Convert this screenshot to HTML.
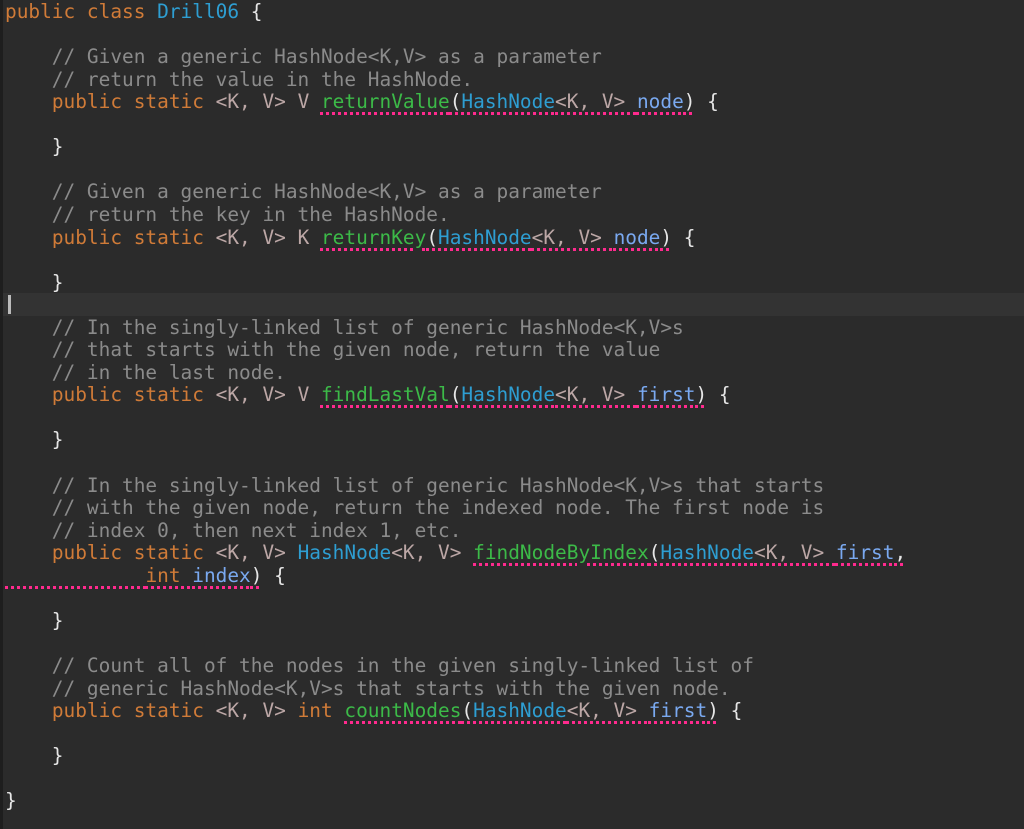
<!DOCTYPE html>
<html><head><meta charset="utf-8"><style>
html,body{margin:0;padding:0;background:#2b2b2b;width:1024px;height:829px;overflow:hidden}
#ed{position:absolute;left:0;top:0;width:1024px;height:829px;background:#2b2b2b;border-left:3px solid #1e1e1e;box-sizing:border-box}
.l{position:absolute;left:2px;height:22.55px;line-height:22.55px;white-space:pre;font-family:"DejaVu Sans Mono","Liberation Mono",monospace;font-size:19.45px;color:#e6e6e6}
.hl{position:absolute;left:0;width:1024px;height:22.55px;background:#333333;top:293px}
.caret{position:absolute;left:5px;top:295px;width:3px;height:19px;background:#bbbbbb}
.k{color:#d07b38}.c{color:#8b8b8b}.t{color:#2e9ed2}.g{color:#bca7a6}.m{color:#3cba48}.p{color:#7aa9f0}.w{color:#e8e8e8}
.u{text-decoration:underline dotted #ff2a8e;text-decoration-thickness:3px;text-underline-offset:4px}
</style></head><body><div id="ed">
<div class="hl"></div><div class="caret"></div>
<div class="l" style="top:1px"><span class="k">public class </span><span class="t">Drill06</span> {</div>
<div class="l c" style="top:46.1px">    // Given a generic HashNode&lt;K,V&gt; as a parameter</div>
<div class="l c" style="top:68.65px">    // return the value in the HashNode.</div>
<div class="l" style="top:91.2px">    <span class="k">public static </span><span class="g">&lt;K, V&gt; V </span><span class="u"><span class="m">returnValue</span>(<span class="t">HashNode</span><span class="g">&lt;K, V&gt; </span><span class="p">node</span>)</span> {</div>
<div class="l" style="top:136.3px">    }</div>
<div class="l c" style="top:181.4px">    // Given a generic HashNode&lt;K,V&gt; as a parameter</div>
<div class="l c" style="top:203.95px">    // return the key in the HashNode.</div>
<div class="l" style="top:226.5px">    <span class="k">public static </span><span class="g">&lt;K, V&gt; K </span><span class="u"><span class="m">returnKey</span>(<span class="t">HashNode</span><span class="g">&lt;K, V&gt; </span><span class="p">node</span>)</span> {</div>
<div class="l" style="top:271.6px">    }</div>
<div class="l c" style="top:316.7px">    // In the singly-linked list of generic HashNode&lt;K,V&gt;s</div>
<div class="l c" style="top:339.25px">    // that starts with the given node, return the value</div>
<div class="l c" style="top:361.8px">    // in the last node.</div>
<div class="l" style="top:384.35px">    <span class="k">public static </span><span class="g">&lt;K, V&gt; V </span><span class="u"><span class="m">findLastVal</span>(<span class="t">HashNode</span><span class="g">&lt;K, V&gt; </span><span class="p">first</span>)</span> {</div>
<div class="l" style="top:429.45px">    }</div>
<div class="l c" style="top:474.55px">    // In the singly-linked list of generic HashNode&lt;K,V&gt;s that starts</div>
<div class="l c" style="top:497.1px">    // with the given node, return the indexed node. The first node is</div>
<div class="l c" style="top:519.65px">    // index 0, then next index 1, etc.</div>
<div class="l" style="top:542.2px">    <span class="k">public static </span><span class="g">&lt;K, V&gt; </span><span class="t">HashNode</span><span class="g">&lt;K, V&gt; </span><span class="u"><span class="m">findNodeByIndex</span>(<span class="t">HashNode</span><span class="g">&lt;K, V&gt; </span><span class="p">first</span>,</span></div>
<div class="l" style="top:564.75px"><span class="u">            <span class="k">int </span><span class="p">index</span>)</span> {</div>
<div class="l" style="top:609.85px">    }</div>
<div class="l c" style="top:654.95px">    // Count all of the nodes in the given singly-linked list of</div>
<div class="l c" style="top:677.5px">    // generic HashNode&lt;K,V&gt;s that starts with the given node.</div>
<div class="l" style="top:700.05px">    <span class="k">public static </span><span class="g">&lt;K, V&gt; </span><span class="k">int </span><span class="u"><span class="m">countNodes</span>(<span class="t">HashNode</span><span class="g">&lt;K, V&gt; </span><span class="p">first</span>)</span> {</div>
<div class="l" style="top:745.15px">    }</div>
<div class="l" style="top:790.25px">}</div>
</div></body></html>
